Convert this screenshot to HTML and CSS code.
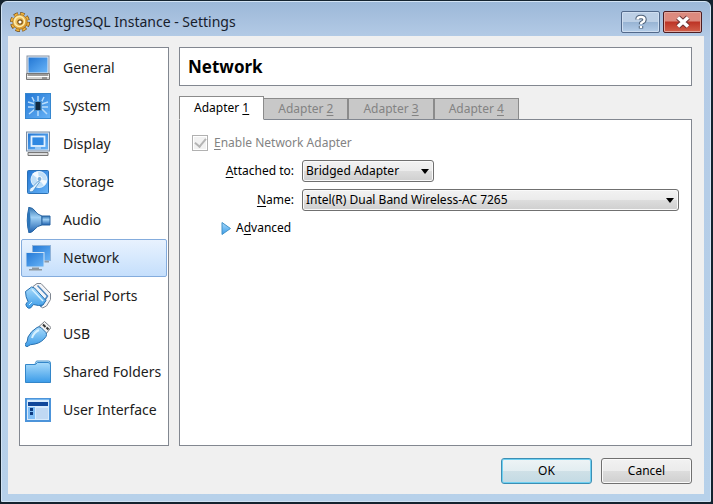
FILE: index.html
```html
<!DOCTYPE html>
<html lang="en">
<head>
    <meta charset="UTF-8">
    <meta name="viewport" content="width=device-width, initial-scale=1.0">
    <title>PostgreSQL Instance - Settings</title>
    <link rel="stylesheet" href="styles.css">
</head>
<body>
    <!-- shared gradients for the icons -->
    <svg class="defs" aria-hidden="true">
        <defs>
            <linearGradient id="blue" x1="0" y1="0" x2="1" y2="1">
                <stop offset="0" stop-color="#2377d4"/>
                <stop offset="1" stop-color="#68b4f8"/>
            </linearGradient>
            <linearGradient id="sky" x1="0" y1="0" x2="0" y2="1">
                <stop offset="0" stop-color="#a9dbfb"/>
                <stop offset="1" stop-color="#3a9be8"/>
            </linearGradient>
            <linearGradient id="cone" x1="0" y1="0" x2="0" y2="1">
                <stop offset="0" stop-color="#2c6fae"/>
                <stop offset="0.4" stop-color="#9fd0f5"/>
                <stop offset="1" stop-color="#1c5fae"/>
            </linearGradient>
            <linearGradient id="gold" x1="0" y1="0" x2="1" y2="1">
                <stop offset="0" stop-color="#ffe08a"/>
                <stop offset="1" stop-color="#d08a1c"/>
            </linearGradient>
        </defs>
    </svg>
    <div class="window">
        <header class="titlebar">
            <svg class="gear" viewBox="0 0 20 20" aria-hidden="true">
                <circle cx="10" cy="10" r="8.200" fill="none" stroke="#6b4614" stroke-width="3.600" stroke-dasharray="4.200 2.240"/>
                <circle cx="10" cy="10" r="8" fill="none" stroke="#f0b23c" stroke-width="2.600" stroke-dasharray="3.400 2.883" stroke-dashoffset="-0.400"/>
                <circle cx="10" cy="10" r="7.300" fill="url(#gold)" stroke="#8d5c14" stroke-width="0.600"/>
                <circle cx="9.500" cy="9.500" r="5" fill="none" stroke="#ffefb0" stroke-width="1.400"/>
                <circle cx="10" cy="10" r="2.200" fill="#fff" stroke="#7c5010" stroke-width="1.200"/>
            </svg>
            <span class="title">PostgreSQL Instance - Settings</span>
            <div class="controls">
                <button type="button" class="control help" aria-label="Help">
                    <svg viewBox="0 0 16 16"><path d="M4.500 5.500Q4.500 3 8 3t3.500 2.500Q11.500 7.300 9.500 8.200Q8 8.800 8 10.300M8 12v2.500" fill="none" stroke="#4d6077" stroke-width="4.400"/><path d="M4.500 5.500Q4.500 3 8 3t3.500 2.500Q11.500 7.300 9.500 8.200Q8 8.800 8 10.300M8 12v2" fill="none" stroke="#fff" stroke-width="2.400"/></svg>
                </button>
                <button type="button" class="control close" aria-label="Close">
                    <svg viewBox="0 0 16 16"><path d="M3 3.500l10 9M13 3.500l-10 9" stroke="#6b3336" stroke-width="5.400"/><path d="M3 3.500l10 9M13 3.500l-10 9" stroke="#fff" stroke-width="3.600"/></svg>
                </button>
            </div>
        </header>

        <div class="dialog">
            <div class="content">
                <nav class="sidebar">
                    <button type="button" class="item">
                        <svg viewBox="0 0 26 26"><rect x="2" y="1" width="22" height="18" fill="#e8edf3" stroke="#8593a6"/><rect x="3.500" y="2.500" width="19" height="15" fill="url(#blue)"/><path d="M1.500 18.500h23v6h-23z" fill="#d2d2d0" stroke="#777"/><path d="M3 20h20" stroke="#666"/><path d="M2 21.500h22" stroke="#fff"/><path d="M17 23h5" stroke="#555"/></svg>
                        General
                    </button>
                    <button type="button" class="item">
                        <svg viewBox="0 0 26 26"><rect x="0.500" y="0.500" width="25" height="25" fill="url(#blue)" stroke="#3687cf"/><path d="M7 4l3 6M13 3v7M19 4l-3 6M3 9l7 2M3 14h7M4 21l6-5M23 9l-6 2M23 14h-6M22 21l-5-5M13 23v-6" stroke="#b9ddfb" stroke-width="1.500"/><rect x="9" y="8" width="8" height="10" fill="#4d92cf"/><rect x="10.500" y="9" width="5" height="8" fill="#112941"/></svg>
                        System
                    </button>
                    <button type="button" class="item">
                        <svg viewBox="0 0 26 26"><rect x="1.500" y="1" width="23" height="19" fill="#dfe8f2" stroke="#7a8da4"/><rect x="3" y="2.500" width="20" height="16" fill="url(#blue)"/><rect x="6.500" y="5.500" width="13" height="9.500" fill="#2f88e2" stroke="#e4f2ff" stroke-width="1.800"/><path d="M10 17h6" stroke="#d8edff"/><path d="M3 21.500h20v3h-20z" fill="#d9dadb" stroke="#777"/></svg>
                        Display
                    </button>
                    <button type="button" class="item">
                        <svg viewBox="0 0 26 26"><rect x="2.500" y="1.500" width="21" height="23" rx="1" fill="url(#blue)" stroke="#2b71b5"/><circle cx="14" cy="10.500" r="8" fill="#bfdff8" stroke="#e4f3ff"/><path d="M14 10.500L7 5a8 8 0 0 1 6-2.500zM14 10.500l8 1a8 8 0 0 1-3 5z" fill="#f4faff"/><circle cx="14.500" cy="10" r="2.500" fill="#7bafdb" stroke="#fff"/><path d="M4.500 21.500q0-3 3-3.500l6-6 1 1-5 7q-1 3-4 3z" fill="#e5f4ff" stroke="#3a84c2" stroke-width="0.700"/></svg>
                        Storage
                    </button>
                    <button type="button" class="item">
                        <svg viewBox="0 0 26 26"><path d="M4 0.500Q8 0.500 10 4t7 5v9q-5 1-7 4t-6 4q-3.500-12 0-26z" fill="url(#cone)" stroke="#2865a3"/><path d="M17 9h8v9h-8z" fill="url(#cone)" stroke="#2865a3"/><path d="M4 1.500q-3.500 11 0 23.500 3-12 0-23.500z" fill="#2c75ba"/></svg>
                        Audio
                    </button>
                    <button type="button" class="item selected">
                        <svg viewBox="0 0 26 26"><path d="M16 15h8v2.500h-8z" fill="#8f9aa6"/><rect x="7.500" y="0.500" width="18" height="15" fill="url(#blue)" stroke="#8fb2d8"/><rect x="1" y="7.500" width="18" height="14.500" fill="url(#blue)" stroke="#cfe3f5"/><path d="M7 22.500h7v1.500h3v1.500h-13v-1.500h3z" fill="#8d979f"/></svg>
                        Network
                    </button>
                    <button type="button" class="item">
                        <svg viewBox="0 0 26 26"><path d="M8 3.500l4-3h4l9.500 10v6l-4 6.500-4 2-2-2z" fill="#f3f4f7" stroke="#7f8690"/><path d="M12.500 2.500l10 10.500-7 11" fill="none" stroke="#4d86bd" stroke-width="1.500"/><path d="M0.500 8.500l6-4.500 3 1 11.500 12.500-3 4.500-4.500 0.500-5-1-3 3.500q-2.500 1-4-1.500t0.500-4l1-1Q0.500 14 0.500 8.500z" fill="url(#sky)" stroke="#276fae"/><path d="M7 6.500l11 11.500" stroke="#d6f1ff" stroke-width="1.500"/><path d="M4 22l3-3" stroke="#d6f1ff"/></svg>
                        Serial Ports
                    </button>
                    <button type="button" class="item">
                        <svg viewBox="0 0 26 26"><path d="M14 5.500l5.500-5 6.500 6-5 6.500z" fill="#f2f2f2" stroke="#7d8187"/><path d="M18 3.500l2.500 2.500M21.500 6.500l2 2" stroke="#333" stroke-width="2"/><path d="M12 6.500q2-1.500 4 0l5 5q1 2 0 4-4 6-11 7.500-5 0-8.500 3l-1.500-2.500q3-3 3-7.500Q6 10 12 6.500z" fill="url(#sky)" stroke="#276fae"/><path d="M7 17q2-6 7-8" fill="none" stroke="#d7f1ff" stroke-width="2"/></svg>
                        USB
                    </button>
                    <button type="button" class="item">
                        <svg viewBox="0 0 26 26"><path d="M9.500 6l2-4h12q2 0 2 2v19h-16z" fill="#c6e7fb" stroke="#4a95cd"/><path d="M0.500 5.500h10l2-2h10.500q2.500 0 2.500 2.500v17.500h-25z" fill="url(#sky)" stroke="#3386c9"/></svg>
                        Shared Folders
                    </button>
                    <button type="button" class="item">
                        <svg viewBox="0 0 26 26"><rect x="1" y="2" width="24" height="22" fill="#d7eafc" stroke="#4c94da" stroke-width="2"/><path d="M2 2.500h22" stroke="#77b7ee"/><rect x="3" y="5" width="20" height="4" fill="#11479a"/><rect x="3" y="10" width="7" height="12" fill="#80bdf5"/><path d="M5 12.500h3M5 16.500h3" stroke="#0d3a80" stroke-width="3"/><rect x="11" y="11" width="12" height="11" fill="#c0d8f3"/></svg>
                        User Interface
                    </button>
                </nav>

                <main class="page">
                    <h1 class="heading">Network</h1>
                    <div class="tabs" role="tablist">
                        <button type="button" role="tab" class="tab active" aria-selected="true">Adapter <u>1</u></button>
                        <button type="button" role="tab" class="tab">Adapter <u>2</u></button>
                        <button type="button" role="tab" class="tab">Adapter <u>3</u></button>
                        <button type="button" role="tab" class="tab">Adapter <u>4</u></button>
                    </div>
                    <form class="pane">
                        <div class="enable">
                            <input type="checkbox" id="enable" checked disabled>
                            <label for="enable"><u>E</u>nable Network Adapter</label>
                        </div>
                        <div class="fields">
                            <label for="attached"><u>A</u>ttached to:</label>
                            <div class="select attached">
                                <select id="attached"><option>Bridged Adapter</option></select>
                            </div>
                            <label for="name"><u>N</u>ame:</label>
                            <div class="select">
                                <select id="name"><option>Intel(R) Dual Band Wireless-AC 7265</option></select>
                            </div>
                        </div>
                        <button type="button" class="advanced">
                            <svg viewBox="0 0 10 13" aria-hidden="true"><path d="M1 0.500L9.500 6.500 1 12.500z" fill="url(#sky)" stroke="#4292c8"/></svg>
                            <span>A<u>d</u>vanced</span>
                        </button>
                    </form>
                </main>
            </div>

            <footer class="buttons">
                <button type="button" class="btn primary">OK</button>
                <button type="button" class="btn">Cancel</button>
            </footer>
        </div>
    </div>
</body>
</html>
```

FILE: styles.css
```css
* {
    box-sizing: border-box;
}

body {
    margin: 0;
    height: 100vh;
    padding: 1px 2px 2px 1px;
    background-color: #14232f;
    font-family: "Noto Sans", sans-serif;
    font-size: 12px;
    line-height: 16px;
    color: #000;
}

button, select {
    font: inherit;
    color: inherit;
}

u {
    text-underline-offset: 2px;
    text-decoration-skip-ink: none;
}

.defs {
    position: absolute;
    width: 0;
    height: 0;
}

.window {
    display: flex;
    flex-direction: column;
    height: 100%;
    padding: 0 6px 7px;
    background: linear-gradient(#9cb8d8, #b4cbe6 36px, #b7d1ea);
    border: 1px solid #d3e4f4;
    border-radius: 6px 6px 0 0;
}

.titlebar {
    display: flex;
    align-items: center;
    gap: 4px;
    height: 34px;
    padding: 6px 2px 0;
}

.gear {
    width: 20px;
    height: 20px;
}

.title {
    flex: 1;
    font-size: 14px;
    line-height: 20px;
    color: #17202c;
}

.controls {
    display: flex;
    align-self: flex-start;
    gap: 3px;
    padding-top: 3px;
}

.control {
    display: flex;
    align-items: center;
    justify-content: center;
    width: 39px;
    height: 22px;
    padding: 0;
    border: 1px solid #52698a;
    border-radius: 2px;
    box-shadow: inset 0 0 0 1px #cfdef0;
    background: linear-gradient(#bccfe5 50%, #97b3d3 50%, #b4cde8);
}

.control svg {
    width: 16px;
    height: 16px;
}

.close {
    border-color: #4d1d22;
    box-shadow: inset 0 0 0 1px #e2a79e;
    background: linear-gradient(#dc8a7e 45%, #bd3325 50%, #d2604b);
}

.dialog {
    flex: 1;
    display: flex;
    flex-direction: column;
    min-height: 0;
    padding: 11px 12px 10px 11px;
    background-color: #f0f0f0;
}

.content {
    flex: 1;
    display: flex;
    gap: 10px;
    min-height: 0;
}

.sidebar {
    width: 150px;
    padding: 1px;
    border: 1px solid #828790;
    background-color: #fff;
}

.item {
    display: flex;
    align-items: center;
    gap: 12px;
    width: 100%;
    height: 38px;
    padding: 0 3px;
    border: 1px solid transparent;
    border-radius: 2px;
    background: none;
    font-size: 14px;
    white-space: nowrap;
    color: #1c1c1c;
}

.item svg {
    flex: none;
    width: 26px;
    height: 26px;
}

.item.selected {
    border-color: #84acdd;
    background: linear-gradient(#e8f2fe, #c5dffc);
}

.page {
    flex: 1;
    display: flex;
    flex-direction: column;
    min-width: 0;
}

.heading {
    margin: 0 0 10px;
    padding: 8px;
    border: 1px solid #828790;
    background-color: #fff;
    font-size: 17px;
    line-height: 21px;
}

.tabs {
    display: flex;
    align-items: flex-end;
    margin-bottom: -1px;
}

.tab {
    height: 22px;
    padding: 0 14px;
    border: 1px solid #8b8b8b;
    border-left-width: 0;
    background-color: #c8c8c8;
    color: #838383;
}

.tab + .tab {
    border-right-width: 2px;
}

.tab:last-child {
    border-right-width: 1px;
}

.tab.active {
    z-index: 1;
    height: 24px;
    border-left-width: 1px;
    border-bottom-color: #fff;
    background-color: #fff;
    color: #000;
}

.pane {
    flex: 1;
    padding: 15px 12px;
    border: 1px solid #828790;
    background-color: #fff;
}

.enable {
    display: flex;
    align-items: center;
    gap: 6px;
    color: #838383;
}

.enable input {
    appearance: none;
    display: grid;
    place-items: center;
    width: 16px;
    height: 16px;
    margin: 0;
    border: 1px solid #b1b1b1;
    background-color: #f2f2f2;
    box-shadow: inset 0 0 0 1px #fff;
}

.enable input::after {
    content: "";
    width: 5px;
    height: 9px;
    margin-bottom: 3px;
    border: solid #b4b4b4;
    border-width: 0 2px 2px 0;
    transform: rotate(40deg);
}

.fields {
    display: grid;
    grid-template-columns: 102px 1fr;
    align-items: center;
    gap: 7px 8px;
    margin-top: 9px;
}

.fields label {
    text-align: right;
}

.select {
    position: relative;
}

.select.attached {
    width: 132px;
}

.select select {
    appearance: none;
    display: block;
    width: 100%;
    height: 22px;
    padding: 0 20px 0 3px;
    border: 1px solid #707070;
    border-radius: 3px;
    box-shadow: inset 0 0 0 1px #fafafa;
    background: linear-gradient(#f2f2f2, #ebebeb 50%, #dddddd 50%, #cfcfcf);
}

.select::after {
    content: "";
    position: absolute;
    top: 9px;
    right: 5px;
    border: 4px solid transparent;
    border-top: 5px solid #000;
    border-bottom: 0;
    pointer-events: none;
}

.advanced {
    display: flex;
    align-items: center;
    gap: 5px;
    margin: 9px 0 0 29px;
    padding: 0;
    border: 0;
    background: none;
}

.advanced svg {
    width: 10px;
    height: 13px;
}

.buttons {
    display: flex;
    justify-content: flex-end;
    gap: 9px;
    margin-top: 12px;
}

.btn {
    width: 91px;
    height: 26px;
    padding: 0;
    border: 1px solid #707070;
    border-radius: 3px;
    box-shadow: inset 0 0 0 1px #fafafa;
    background: linear-gradient(#f2f2f2, #ebebeb 50%, #dddddd 50%, #cfcfcf);
}

.btn.primary {
    border-color: #3c8fb4;
    box-shadow: inset 0 0 0 1px #6fd0f2;
    background: linear-gradient(#eef4f6, #e2edf1 50%, #cfe0e7 50%, #c3dae4);
}
```
